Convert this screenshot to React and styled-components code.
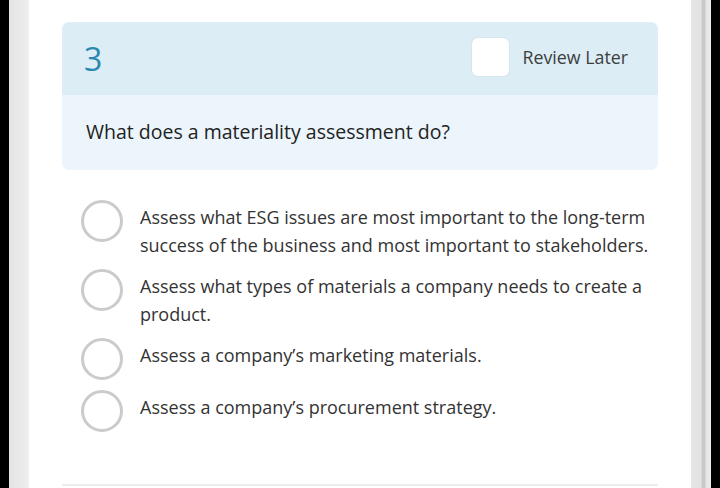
import React from "react";
import styled, { createGlobalStyle } from "styled-components";

const GlobalStyle = createGlobalStyle`
  html, body {
    margin: 0;
    padding: 0;
    background: #000;
  }
  body {
    font-family: "Open Sans", "Noto Sans", sans-serif;
  }
`;

const Screen = styled.div`
  display: flex;
  height: 488px;
  padding: 0 9px;
  overflow: hidden;
  background: #000;
`;

const Gutter = styled.div`
  flex: 0 0 20px;
  background: ${(props) =>
    props.right
      ? "linear-gradient(to right, #e6e6e6 0, #e2e2e2 10px, #c9c9c9 11px, #c9c9c9 14px, #e4e4e4 15px, #ececec 20px)"
      : "linear-gradient(to right, #e4e4e4 0, #ececec 18px, #f4f4f4 20px)"};
`;

const Page = styled.div`
  flex: 1;
  background: #fff;
  padding: 22px 33px 0;
  display: flex;
  flex-direction: column;
`;

const Card = styled.div`
  border-radius: 7px;
  overflow: hidden;
`;

const CardHeader = styled.div`
  height: 73px;
  background: #dcedf6;
  display: flex;
  align-items: center;
  justify-content: space-between;
  padding: 0 30px 4px 22px;
  box-sizing: border-box;
`;

const Number = styled.div`
  font-size: 32px;
  color: #2a88b0;
  line-height: 1;
  margin-top: 4px;
`;

const ReviewLater = styled.label`
  display: flex;
  align-items: center;
  gap: 14px;
  font-size: 17.8px;
  color: #3d3d3d;
`;

const CheckBox = styled.span`
  width: 37px;
  height: 38px;
  border-radius: 6px;
  background: #fff;
  box-shadow: 0 0 0 1px #d4e6ef;
`;

const Question = styled.div`
  height: 75px;
  background: #ebf5fb;
  display: flex;
  align-items: center;
  padding: 0 24px 2px;
  box-sizing: border-box;
  font-size: 19.5px;
  color: #222;
`;

const Options = styled.div`
  display: flex;
  flex-direction: column;
  gap: 10px;
  margin-top: 30px;
  padding-left: 19px;
`;

const Option = styled.div`
  display: flex;
  align-items: flex-start;
  gap: 17px;
`;

const Radio = styled.span`
  flex: 0 0 auto;
  width: 36px;
  height: 36px;
  border: 3px solid #cbcbcb;
  border-radius: 50%;
`;

const OptionText = styled.div`
  padding-top: 4px;
  font-size: 18px;
  line-height: 27.5px;
  color: #333;
  max-width: 520px;
`;

const Divider = styled.div`
  margin-top: auto;
  margin-bottom: 2px;
  height: 2px;
  background: #ececec;
`;

const answers = [
  "Assess what ESG issues are most important to the long-term success of the business and most important to stakeholders.",
  "Assess what types of materials a company needs to create a product.",
  "Assess a company\u2019s marketing materials.",
  "Assess a company\u2019s procurement strategy.",
];

export default function App() {
  return (
    <>
      <GlobalStyle />
      <Screen>
        <Gutter />
        <Page>
          <Card>
            <CardHeader>
              <Number>3</Number>
              <ReviewLater>
                <CheckBox />
                Review Later
              </ReviewLater>
            </CardHeader>
            <Question>What does a materiality assessment do?</Question>
          </Card>
          <Options>
            {answers.map((a) => (
              <Option key={a}>
                <Radio />
                <OptionText>{a}</OptionText>
              </Option>
            ))}
          </Options>
          <Divider />
        </Page>
        <Gutter right />
      </Screen>
    </>
  );
}
